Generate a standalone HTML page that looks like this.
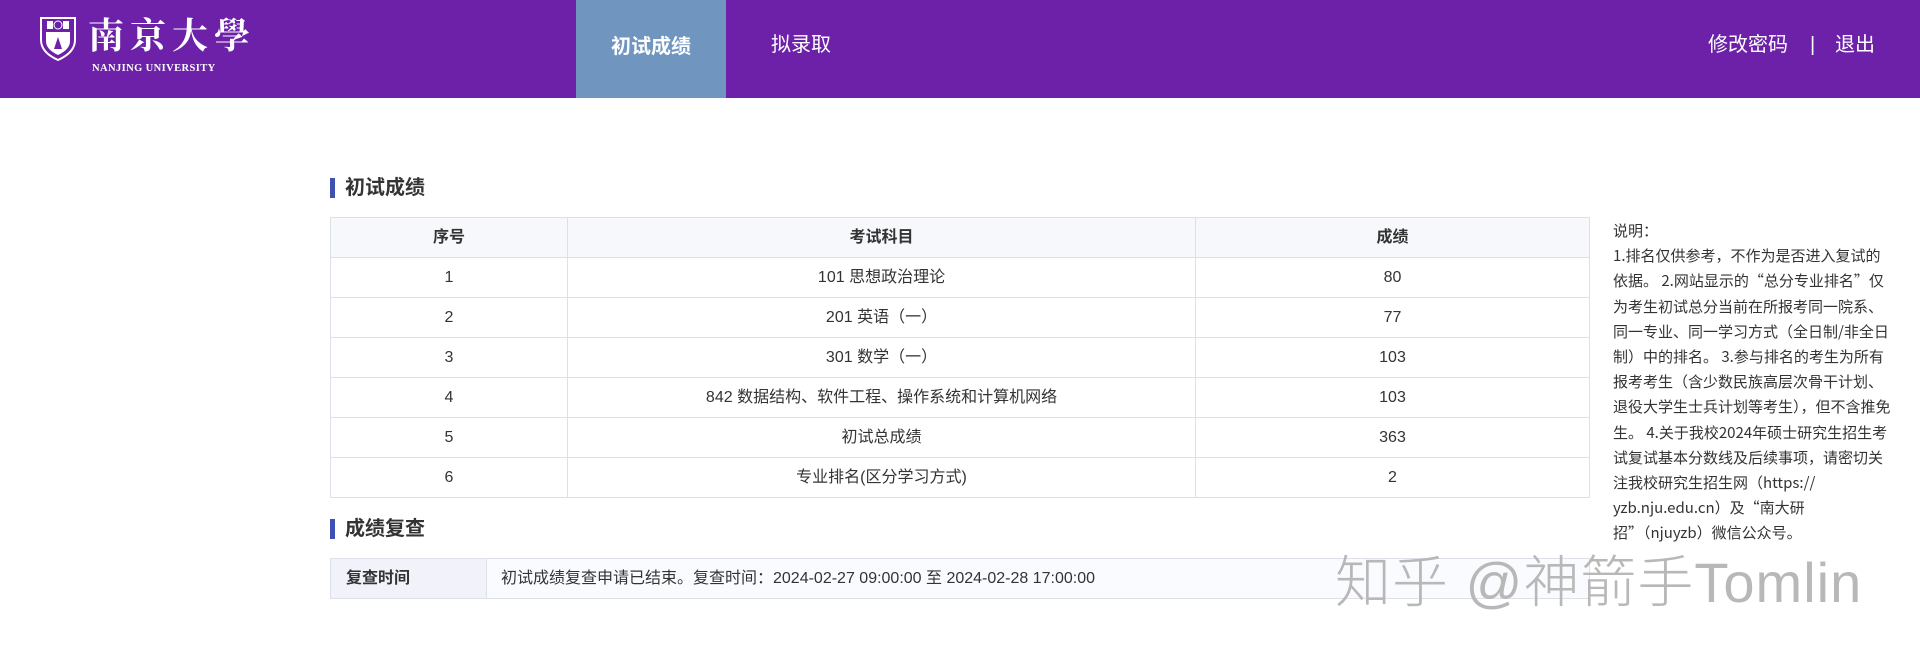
<!DOCTYPE html>
<html><head><meta charset="utf-8"><style>
*{margin:0;padding:0;box-sizing:border-box}
body{width:1920px;height:647px;background:#fff;font-family:"Liberation Sans","Noto Sans CJK SC",sans-serif;color:#333;position:relative;overflow:hidden}
.hd{position:absolute;left:0;top:0;width:1920px;height:98px;background:#6c21a8}
.tab{position:absolute;left:576px;top:0;width:150px;height:98px;background:#7096c0;color:#fff;font-size:20px;font-weight:bold;text-align:center;line-height:94px}
.nav{position:absolute;color:#fff;font-size:20px;top:32px;line-height:26px}
.t{position:absolute;font-size:20px;font-weight:bold;color:#333;padding-left:15px;height:22px;line-height:22px}
.t:before{content:"";position:absolute;left:0;top:1px;width:5px;height:20px;background:#3f51b5}
table{position:absolute;border-collapse:collapse;font-size:16px}
td,th{border:1px solid #dde0e8;text-align:center;height:40px;font-weight:normal;line-height:20px;padding:0;vertical-align:middle}
th{background:#f7f8fc;font-weight:bold}
.note{position:absolute;left:1613px;top:218px;width:282px;font-size:15px;line-height:25.2px;color:#333;font-family:"Noto Sans CJK SC","Liberation Sans",sans-serif}
.wm{position:absolute;left:1335px;top:538px;font-size:56px;color:#b8b8b8;letter-spacing:1px;white-space:nowrap;font-family:"Liberation Sans","Noto Sans CJK SC",sans-serif;font-weight:300}
</style></head><body>
<div class="hd">
<svg style="position:absolute;left:39px;top:16px" width="38" height="45" viewBox="0 0 38 45"><path d="M2 2h34v22c0 10-8 16-17 20C10 40 2 34 2 24z" fill="none" stroke="#fff" stroke-width="2"/><path d="M7 16h24v9c0 7-6 11-12 14-6-3-12-7-12-14z" fill="#fff"/><rect x="8" y="5" width="6" height="8" fill="#fff"/><rect x="24" y="5" width="6" height="8" fill="#fff"/><circle cx="19" cy="9" r="4" fill="none" stroke="#fff"/><path d="M15 33l4-12 4 12z" fill="#6c21a8"/></svg>
<div style="position:absolute;left:88px;top:12px;color:#fff;font-family:'Noto Serif CJK SC',serif;font-size:36px;font-weight:bold;letter-spacing:6px;line-height:44px">南京大學</div>
<div style="position:absolute;left:92px;top:63px;color:#fff;font-family:'Liberation Serif',serif;font-size:10.5px;font-weight:bold;letter-spacing:0.4px">NANJING UNIVERSITY</div>
<div class="tab">初试成绩</div>
<div class="nav" style="left:771px">拟录取</div>
<div class="nav" style="left:1708px">修改密码</div>
<div class="nav" style="left:1810px">|</div>
<div class="nav" style="left:1835px">退出</div>
</div>
<div class="t" style="left:330px;top:177px">初试成绩</div>
<table style="left:330px;top:217px;width:1260px">
<tr><th style="width:237px">序号</th><th style="width:628px">考试科目</th><th>成绩</th></tr>
<tr><td>1</td><td>101 思想政治理论</td><td>80</td></tr>
<tr><td>2</td><td>201 英语（一）</td><td>77</td></tr>
<tr><td>3</td><td>301 数学（一）</td><td>103</td></tr>
<tr><td>4</td><td>842 数据结构、软件工程、操作系统和计算机网络</td><td>103</td></tr>
<tr><td>5</td><td>初试总成绩</td><td>363</td></tr>
<tr><td>6</td><td>专业排名(区分学习方式)</td><td>2</td></tr>
</table>
<div class="t" style="left:330px;top:518px">成绩复查</div>
<table style="left:330px;top:558px;width:1260px">
<tr><th style="width:156px;text-align:left;padding-left:15px;background:#f2f3fa">复查时间</th><td style="text-align:left;padding-left:14px;background:#fafbfe">初试成绩复查申请已结束。复查时间：2024-02-27 09:00:00 至 2024-02-28 17:00:00</td></tr>
</table>
<div class="note">说明：<br>1.排名仅供参考，不作为是否进入复试的依据。 2.网站显示的“总分专业排名”仅为考生初试总分当前在所报考同一院系、同一专业、同一学习方式（全日制/非全日制）中的排名。 3.参与排名的考生为所有报考考生（含少数民族高层次骨干计划、退役大学生士兵计划等考生），但不含推免生。 4.关于我校2024年硕士研究生招生考试复试基本分数线及后续事项，请密切关注我校研究生招生网（https://<br>yzb.nju.edu.cn）及“南大研<br>招”（njuyzb）微信公众号。</div>
<div class="wm">知乎 @神箭手Tomlin</div>
</body></html>
